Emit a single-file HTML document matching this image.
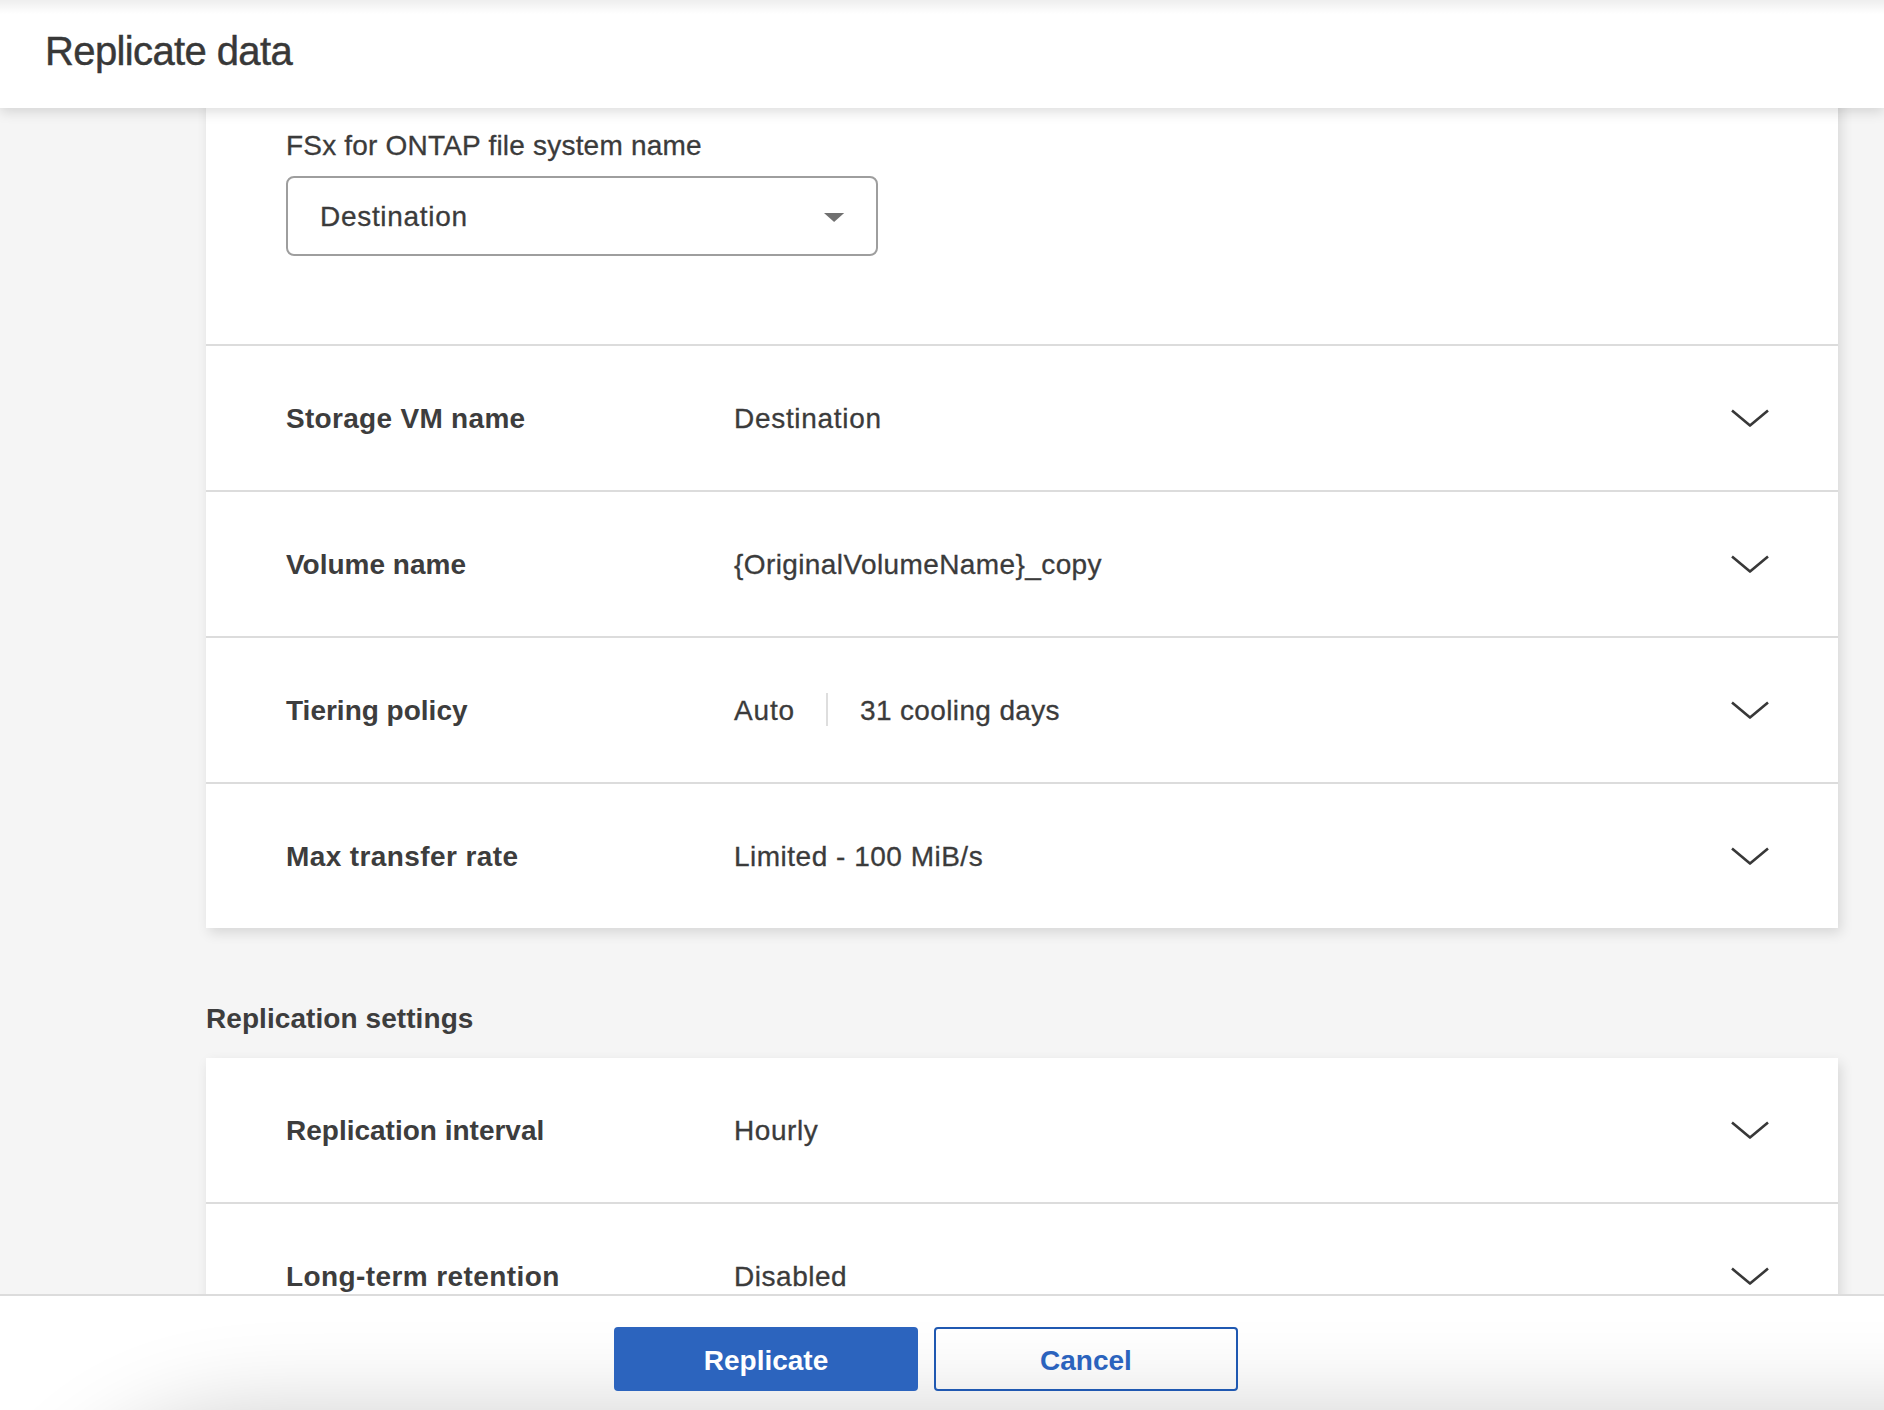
<!DOCTYPE html>
<html>
<head>
<meta charset="utf-8">
<style>
html,body{margin:0;padding:0;}
body{width:1884px;height:1410px;overflow:hidden;position:relative;background:#f5f5f5;font-family:"Liberation Sans",sans-serif;color:#3b3b3b;}
.abs{position:absolute;}
.t{position:absolute;white-space:nowrap;font-size:28px;line-height:40px;-webkit-text-stroke:0.3px #3b3b3b;}
.b{-webkit-text-stroke:0;}
.b{font-weight:bold;color:#3d3d3d;}
#header{left:0;top:0;width:1884px;height:108px;background:#fff;z-index:5;box-shadow:0 4px 12px rgba(0,0,0,.135);}
#topshade{left:0;top:0;width:1884px;height:14px;background:linear-gradient(rgba(0,0,0,.065),rgba(0,0,0,0));}
#title{left:45px;top:29px;letter-spacing:-0.62px;font-size:40px;line-height:44px;color:#383838;-webkit-text-stroke:0.45px #383838;}
.card{background:#fff;left:206px;width:1632px;box-shadow:3px 5px 12px rgba(0,0,0,.12);}
.sep{position:absolute;left:0;width:1632px;height:2px;background:#dcdcdc;}
.chev{position:absolute;left:1525px;width:38px;height:18px;}
#footer{left:0;top:1294px;width:1884px;height:116px;background:#fff;z-index:5;border-top:2px solid #dcdcdc;box-sizing:border-box;overflow:hidden;}
#wshadow{left:55px;top:150px;width:3000px;height:400px;border-radius:240px;background:#000;box-shadow:0 0 100px 24px rgba(0,0,0,.23);}
.btn{position:absolute;top:31px;height:64px;width:304px;box-sizing:border-box;border-radius:4px;font-weight:bold;font-size:28px;text-align:center;line-height:68px;}
</style>
</head>
<body>
<div id="header" class="abs">
  <div id="topshade" class="abs"></div>
  <div id="title" class="t">Replicate data</div>
</div>

<div class="card abs" style="top:-200px;height:1128px;">
  <!-- FSx section -->
  <div class="t" style="left:80px;top:326px;letter-spacing:0.2px;">FSx for ONTAP file system name</div>
  <div class="abs" style="left:80px;top:376px;width:592px;height:80px;box-sizing:border-box;border:2px solid #9e9e9e;border-radius:8px;">
    <div class="t" style="left:32px;top:19px;letter-spacing:0.7px;">Destination</div>
    <svg class="abs" style="left:536px;top:35px;" width="22" height="12" viewBox="0 0 22 12"><path d="M0 0 L20.2 0 L10.1 9 Z" fill="#707070"/></svg>
  </div>
  <div class="sep" style="top:544px;"></div>
  <!-- rows -->
  <div class="t b" style="left:80px;top:599px;letter-spacing:0.3px;">Storage VM name</div>
  <div class="t" style="left:528px;top:599px;letter-spacing:0.7px;">Destination</div>
  <svg class="chev" style="top:609px;" viewBox="0 0 38 18"><path d="M1 1.6 L19 16.6 L37 1.6" fill="none" stroke="#383838" stroke-width="2.6" stroke-linejoin="round"/></svg>
  <div class="sep" style="top:690px;"></div>

  <div class="t b" style="left:80px;top:745px;">Volume name</div>
  <div class="t" style="left:528px;top:745px;letter-spacing:0.4px;">{OriginalVolumeName}_copy</div>
  <svg class="chev" style="top:755px;" viewBox="0 0 38 18"><path d="M1 1.6 L19 16.6 L37 1.6" fill="none" stroke="#383838" stroke-width="2.6" stroke-linejoin="round"/></svg>
  <div class="sep" style="top:836px;"></div>

  <div class="t b" style="left:80px;top:891px;">Tiering policy</div>
  <div class="t" style="left:528px;top:891px;letter-spacing:0.85px;">Auto</div>
  <div class="abs" style="left:620px;top:893px;width:2px;height:33px;background:#dedede;"></div>
  <div class="t" style="left:654px;top:891px;letter-spacing:0.36px;">31 cooling days</div>
  <svg class="chev" style="top:901px;" viewBox="0 0 38 18"><path d="M1 1.6 L19 16.6 L37 1.6" fill="none" stroke="#383838" stroke-width="2.6" stroke-linejoin="round"/></svg>
  <div class="sep" style="top:982px;"></div>

  <div class="t b" style="left:80px;top:1037px;letter-spacing:0.4px;">Max transfer rate</div>
  <div class="t" style="left:528px;top:1037px;letter-spacing:0.5px;">Limited - 100 MiB/s</div>
  <svg class="chev" style="top:1047px;" viewBox="0 0 38 18"><path d="M1 1.6 L19 16.6 L37 1.6" fill="none" stroke="#383838" stroke-width="2.6" stroke-linejoin="round"/></svg>
</div>

<div class="t b" style="left:206px;top:999px;letter-spacing:0.07px;">Replication settings</div>

<div class="card abs" style="top:1058px;height:400px;">
  <div class="t b" style="left:80px;top:53px;">Replication interval</div>
  <div class="t" style="left:528px;top:53px;letter-spacing:0.58px;">Hourly</div>
  <svg class="chev" style="top:63px;" viewBox="0 0 38 18"><path d="M1 1.6 L19 16.6 L37 1.6" fill="none" stroke="#383838" stroke-width="2.6" stroke-linejoin="round"/></svg>
  <div class="sep" style="top:144px;"></div>
  <div class="t b" style="left:80px;top:199px;letter-spacing:0.41px;">Long-term retention</div>
  <div class="t" style="left:528px;top:199px;letter-spacing:0.53px;">Disabled</div>
  <svg class="chev" style="top:209px;" viewBox="0 0 38 18"><path d="M1 1.6 L19 16.6 L37 1.6" fill="none" stroke="#383838" stroke-width="2.6" stroke-linejoin="round"/></svg>
</div>

<div id="footer" class="abs">
  <div id="wshadow" class="abs"></div>
  <div class="btn" style="left:614px;background:#2c64be;color:#fff;">Replicate</div>
  <div class="btn" style="left:934px;border:2px solid #1f58b1;color:#2b63bd;background:transparent;line-height:64px;">Cancel</div>
</div>
</body>
</html>
